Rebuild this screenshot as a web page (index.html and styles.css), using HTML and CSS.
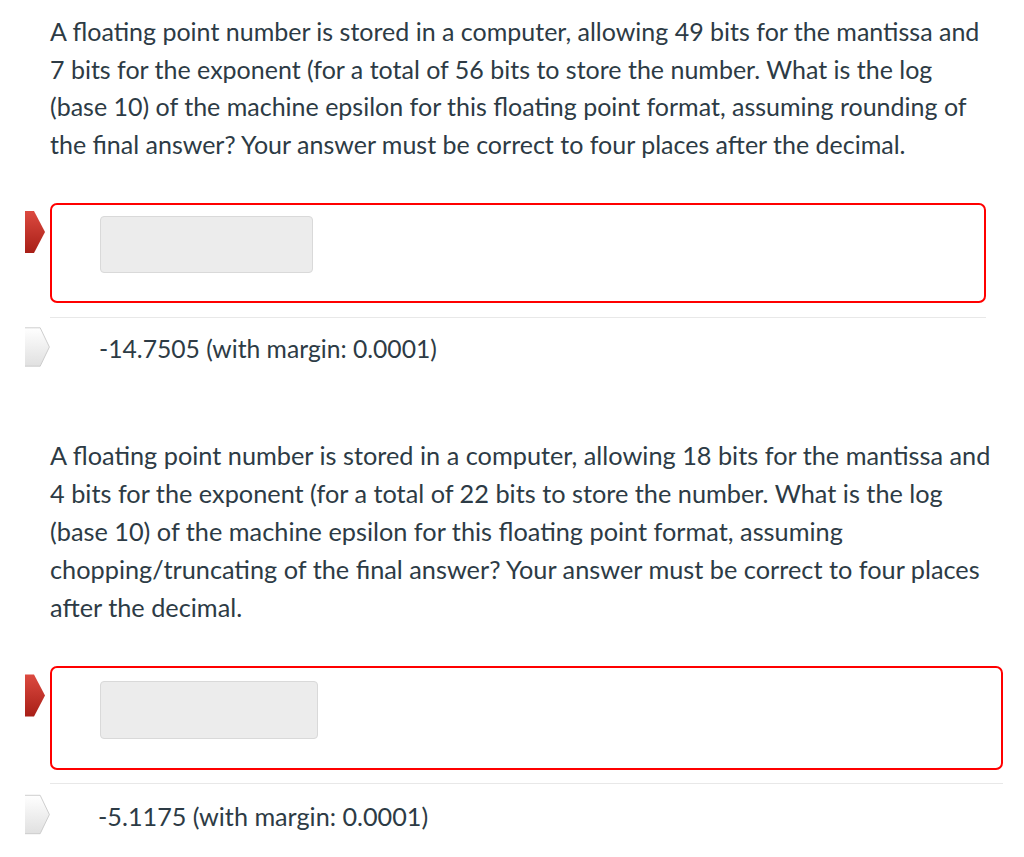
FILE: index.html
```html
<!DOCTYPE html>
<html lang="en">
<head>
<meta charset="utf-8">
<title>Quiz results</title>
<link rel="stylesheet" href="styles.css">
</head>
<body>
<div class="page">
  <section class="question q1">
    <p class="question-text">A floating point number is stored in a computer, allowing 49 bits for the mantissa and 7 bits for the exponent (for a total of 56 bits to store the number. What is the log (base 10) of the machine epsilon for this floating point format, assuming rounding of the final answer? Your answer must be correct to four places after the decimal.</p>
    <div class="answer-row">
      <div class="marker">
        <svg class="arrow" viewBox="0 0 20 42" width="20" height="42" aria-hidden="true">
          <defs>
            <linearGradient id="red1" x1="0" y1="0" x2="0" y2="1">
              <stop offset="0" stop-color="#dc4a40"/>
              <stop offset="1" stop-color="#a81f17"/>
            </linearGradient>
          </defs>
          <polygon points="0,0 9,0 20,21 9,42 0,42" fill="url(#red1)"/>
        </svg>
      </div>
      <div class="response-box">
        <div class="input-field"></div>
      </div>
    </div>
    <div class="correct-row">
      <div class="marker">
        <svg class="arrow-gray" viewBox="0 0 28 44" width="28" height="44" aria-hidden="true">
          <defs>
            <linearGradient id="gray1" x1="0" y1="0" x2="0" y2="1">
              <stop offset="0" stop-color="#ffffff"/>
              <stop offset="1" stop-color="#e0e0e0"/>
            </linearGradient>
          </defs>
          <polygon points="-1,0.5 17,0.5 27.3,22 17,43.5 -1,43.5" fill="url(#gray1)" stroke="#c8c8c8" stroke-width="1"/>
        </svg>
      </div>
      <span class="correct-text">-14.7505 (with margin: 0.0001)</span>
    </div>
  </section>

  <section class="question q2">
    <p class="question-text">A floating point number is stored in a computer, allowing 18 bits for the mantissa and 4 bits for the exponent (for a total of 22 bits to store the number. What is the log (base 10) of the machine epsilon for this floating point format, assuming chopping/truncating of the final answer? Your answer must be correct to four places after the decimal.</p>
    <div class="answer-row">
      <div class="marker">
        <svg class="arrow" viewBox="0 0 20 42" width="20" height="43" aria-hidden="true">
          <defs>
            <linearGradient id="red2" x1="0" y1="0" x2="0" y2="1">
              <stop offset="0" stop-color="#dc4a40"/>
              <stop offset="1" stop-color="#a81f17"/>
            </linearGradient>
          </defs>
          <polygon points="0,0 9,0 20,21 9,42 0,42" fill="url(#red2)"/>
        </svg>
      </div>
      <div class="response-box">
        <div class="input-field"></div>
      </div>
    </div>
    <div class="correct-row">
      <div class="marker">
        <svg class="arrow-gray" viewBox="0 0 28 44" width="28" height="43" aria-hidden="true">
          <defs>
            <linearGradient id="gray2" x1="0" y1="0" x2="0" y2="1">
              <stop offset="0" stop-color="#ffffff"/>
              <stop offset="1" stop-color="#e0e0e0"/>
            </linearGradient>
          </defs>
          <polygon points="-1,0.5 17,0.5 27.3,22 17,43.5 -1,43.5" fill="url(#gray2)" stroke="#c8c8c8" stroke-width="1"/>
        </svg>
      </div>
      <span class="correct-text">-5.1175 (with margin: 0.0001)</span>
    </div>
  </section>
</div>
</body>
</html>
```

FILE: styles.css
```css
html, body {
  margin: 0;
  padding: 0;
  background: #ffffff;
}

body {
  font-family: Lato, "Open Sans", Arial, sans-serif;
  color: #2d3b45;
}

.page {
  padding-top: 13px;
}

.question {
  display: flex;
  flex-direction: column;
}

.question-text {
  margin: 0 0 0 50px;
  font-size: 25px;
  line-height: 37.5px;
}

.q1 .question-text { width: 936px; }
.q2 .question-text { width: 953px; font-size: 25.3px; line-height: 38px; }

.answer-row {
  display: flex;
  align-items: flex-start;
  margin-top: 40px;
}

.marker {
  width: 50px;
  flex: 0 0 50px;
  display: flex;
  padding-left: 25px;
  box-sizing: border-box;
}

.answer-row .marker { padding-top: 8px; }

.response-box {
  border: 2px solid #ff0000;
  border-radius: 7px;
  box-sizing: border-box;
  padding: 11px 0 28px 48px;
}

.q1 .response-box { width: 936px; }
.q2 .response-box { width: 953px; padding: 13px 0 29px 48px; }

.input-field {
  background: #ececec;
  border: 1px solid #d9d9d9;
  border-radius: 4px;
  box-sizing: border-box;
  width: 213px;
  height: 57px;
}

.q2 .input-field { width: 218px; height: 58px; }

.correct-row {
  display: flex;
  align-items: center;
  position: relative;
  margin-top: 14px;
  padding-top: 6px;
}

.correct-row::before {
  content: "";
  position: absolute;
  top: 0;
  left: 50px;
  right: 0;
  border-top: 1px solid #e8e8e8;
}

.q1 .correct-row { width: 986px; }
.q2 .correct-row { width: 1003px; margin-top: 13px; padding-top: 7px; }

.correct-text {
  font-size: 24.7px;
  padding-left: 49px;
  padding-top: 4px;
  line-height: 44px;
}

.q2 .correct-text { padding-left: 48px; font-size: 25.2px; }

.q2 {
  margin-top: 65px;
}
```
